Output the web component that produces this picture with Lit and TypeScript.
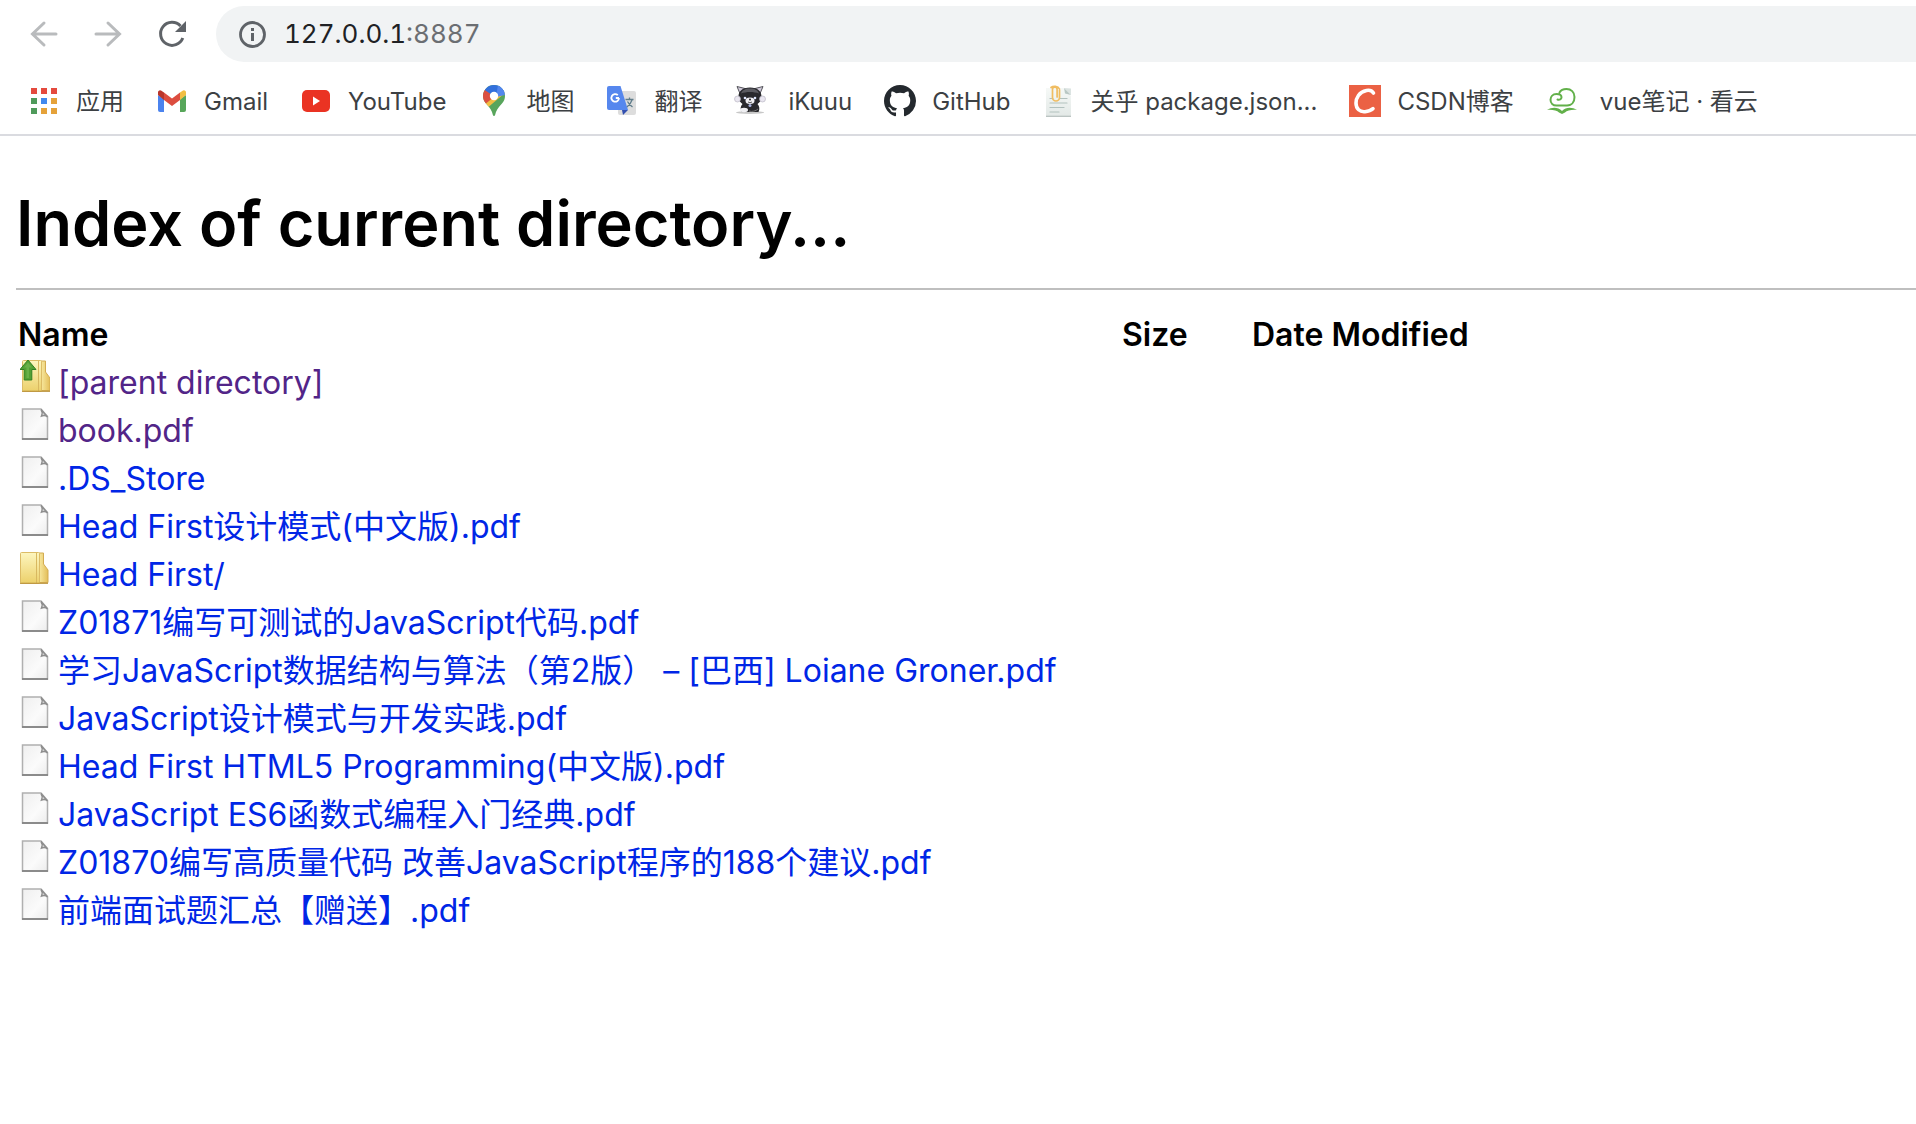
import { LitElement, html, svg, css } from "lit";
import { customElement } from "lit/decorators.js";
import { classMap } from "lit/directives/class-map.js";

type Kind = "parent" | "folder" | "file";

interface Entry {
  name: string;
  kind: Kind;
  visited?: boolean;
}

const entries: Entry[] = [
  { name: "[parent directory]", kind: "parent", visited: true },
  { name: "book.pdf", kind: "file", visited: true },
  { name: ".DS_Store", kind: "file" },
  { name: "Head First设计模式(中文版).pdf", kind: "file" },
  { name: "Head First/", kind: "folder" },
  { name: "Z01871编写可测试的JavaScript代码.pdf", kind: "file" },
  { name: "学习JavaScript数据结构与算法（第2版） – [巴西] Loiane Groner.pdf", kind: "file" },
  { name: "JavaScript设计模式与开发实践.pdf", kind: "file" },
  { name: "Head First HTML5 Programming(中文版).pdf", kind: "file" },
  { name: "JavaScript ES6函数式编程入门经典.pdf", kind: "file" },
  { name: "Z01870编写高质量代码 改善JavaScript程序的188个建议.pdf", kind: "file" },
  { name: "前端面试题汇总【赠送】.pdf", kind: "file" },
];

const appsIcon = svg`
  <g fill="#e44a3e"><rect x="3" y="3" width="6" height="6"/><rect x="13" y="3" width="6" height="6"/><rect x="23" y="3" width="6" height="6"/></g>
  <g fill="#4f9a5b"><rect x="3" y="13" width="6" height="6"/><rect x="3" y="23" width="6" height="6"/></g>
  <rect x="13" y="13" width="6" height="6" fill="#4189ee"/>
  <g fill="#e5a23a"><rect x="23" y="13" width="6" height="6"/><rect x="13" y="23" width="6" height="6"/><rect x="23" y="23" width="6" height="6"/></g>`;

const gmailIcon = svg`
  <path d="M2 10V25a2 2 0 0 0 2 2h4V14z" fill="#4b83ee"/>
  <path d="M30 10V25a2 2 0 0 1-2 2h-4V14z" fill="#57a65a"/>
  <path d="M24 7.500L27 5.600a2 2 0 0 1 3 2V10l-6 5z" fill="#f2be42"/>
  <path d="M8 7.500L16 13.500 24 7.500V15L16 21 8 15z" fill="#dc4d3f"/>
  <path d="M8 7.500L5 5.600a2 2 0 0 0-3 2V10l6 5z" fill="#b9352b"/>`;

const youtubeIcon = svg`
  <rect x="2" y="5" width="28" height="22" rx="5" fill="#ea3323"/>
  <path d="M13 11.500v9l7-4.500z" fill="#fff"/>`;

const mapsIcon = svg`
  <clipPath id="pin"><path d="M16 0a11 11 0 0 0-11 11c0 3 1 5 3 7.500 4 4.500 6 7 6.900 11.500.3 1.300 1.900 1.300 2.200 0C18 25.500 20 23 24 18.500c2-2.500 3-4.500 3-7.500A11 11 0 0 0 16 0z"/></clipPath>
  <g clip-path="url(#pin)">
    <rect width="32" height="32" fill="#58a55c"/>
    <path d="M0 26L20 4 27 8 8 24H0z" fill="#f1bd42"/>
    <path d="M0 15L7 4l9 8L6 20z" fill="#db4f42"/>
    <path d="M5 4L12 -3H30V7L23 7.500 16 11z" fill="#3270dc"/>
    <path d="M20 0h12v9L18 12z" fill="#5387ee"/>
  </g>
  <circle cx="16" cy="11" r="4.200" fill="#fff"/>`;

const translateIcon = svg`
  <rect x="12" y="6" width="18" height="24" rx="2" fill="#dddddd"/>
  <path d="M16 25h6l-5 5z" fill="#3350b0"/>
  <path d="M3 1H14.500L22 25H3a2 2 0 0 1-2-2V3a2 2 0 0 1 2-2z" fill="#5687ee"/>
  <path d="M13 13H9.800M13 13a3.800 3.800 0 1 1-1.200-2.900" fill="none" stroke="#fff" stroke-width="1.800"/>
  <path d="M19.500 14.500h8M23.500 12.500v2M26 15c-1 3-3 5.500-5 7M21.500 16.500c1 2 3 4 5 5.500" fill="none" stroke="#607d8b" stroke-width="1.300"/>`;

const catIcon = svg`
  <ellipse cx="16" cy="27.500" rx="14" ry="1.500" fill="#c8c8c8"/>
  <path d="M3 1.500L13 4 7 11zM29 1.500L19 4 25 11z" fill="#cfc9d8" stroke="#55555c" stroke-width="1"/>
  <path d="M16 2.500c8 0 11.500 4 11.500 9 0 4-2 6-4 7.500 2 2 2.500 5 1 8h-17c-1.500-3-1-6 1-8-2-1.500-4-3.500-4-7.500 0-5 3.500-9 11.500-9z" fill="#29292d"/>
  <path d="M16 3.500c5 0 8 2 9 5-5-2-13-2-18 0 1-3 4-5 9-5z" fill="#5b5b61"/>
  <circle cx="3.500" cy="14" r="3" fill="#e9e6f0" stroke="#b4b0be" stroke-width=".6"/>
  <circle cx="28.500" cy="14" r="3" fill="#e9e6f0" stroke="#b4b0be" stroke-width=".6"/>
  <ellipse cx="16" cy="15.800" rx="4.500" ry="3.200" fill="#f1f0f4"/>
  <circle cx="11" cy="13" r="1.300" fill="#dfe7ff"/><circle cx="21" cy="13" r="1.300" fill="#dfe7ff"/>
  <circle cx="16" cy="14.500" r="1" fill="#222"/>
  <path d="M14 17q2 1.500 4 0" stroke="#333" stroke-width=".8" fill="none"/>
  <circle cx="16" cy="20.500" r="1.500" fill="#aab3e0"/>
  <ellipse cx="10" cy="25" rx="4" ry="2.200" fill="#efeff2"/>
  <path d="M15 26c3 1 7 0 9-2" stroke="#777" stroke-width="1" fill="none"/>`;

const githubIcon = svg`
  <path transform="scale(2)" fill="#24292e" fill-rule="evenodd" d="M8 0C3.580 0 0 3.580 0 8c0 3.540 2.290 6.530 5.470 7.590.4.070.55-.17.55-.38 0-.19-.01-.82-.01-1.490-2.010.37-2.530-.49-2.690-.94-.09-.23-.48-.94-.82-1.130-.28-.15-.68-.52-.01-.53.63-.01 1.080.58 1.230.82.72 1.210 1.870.87 2.330.66.070-.52.28-.87.51-1.070-1.780-.2-3.640-.89-3.640-3.950 0-.87.31-1.590.82-2.150-.08-.2-.36-1.020.08-2.120 0 0 .67-.21 2.200.82.64-.18 1.320-.27 2-.27s1.360.09 2 .27c1.530-1.040 2.200-.82 2.200-.82.44 1.100.16 1.920.08 2.120.51.56.82 1.270.82 2.150 0 3.070-1.870 3.750-3.650 3.950.29.25.54.73.54 1.480 0 1.070-.01 1.930-.01 2.200 0 .21.15.46.55.38A8.010 8.010 0 0 0 16 8c0-4.420-3.580-8-8-8z"/>`;

const noteIcon = svg`
  <defs><linearGradient id="note" x1="0" y1="0" x2="0" y2="1"><stop offset="0" stop-color="#f6f9f7"/><stop offset="1" stop-color="#e3e9e7"/></linearGradient></defs>
  <path d="M4 3H22l7 8V31H4z" fill="url(#note)"/>
  <path d="M4 31.300H29" stroke="#b4bebc" stroke-width="1.200"/>
  <path d="M22 3l7 7V3.500z" fill="#dce4e2"/>
  <path d="M22 3l7 7-6-1.500z" fill="#b9c8c4"/>
  <path d="M8 13.500h3M18 13.500h7M8 18h17M8 22.500h14M8 27h9" stroke="#b2c1be" stroke-width="1.200" stroke-linecap="round"/>
  <path d="M17.500 5v7.500a3.500 3.500 0 0 1-7 0V4.500a2.300 2.300 0 0 1 4.600 0V12M9 2.500C11 .8 16 .5 17.500 4" fill="none" stroke="#f0bd62" stroke-width="1.700" stroke-linecap="round"/>`;

const csdnIcon = svg`
  <rect width="32" height="32" fill="#eb6144"/>
  <path d="M24.500 8C23 5.800 20 5 17.500 5.500 10 7 7 13 7 18c0 6 4 9.200 9 8.700 3-.3 6-1.200 8-3" fill="none" stroke="#fff" stroke-width="3.600" stroke-linecap="round"/>`;

const cloudIcon = svg`
  <path d="M11.500 14.500c2 .8 4-.3 4-2.200 0-2.200-2.500-3.300-5-3.300-4 0-6 3-6 5.800 0 3.400 2.500 5.700 6 5.700H21c5 0 7.500-4 7.500-8.500 0-5-3.500-8-8-8-3.500 0-6 1.500-7 3.500" fill="none" stroke="#62b04a" stroke-width="2" stroke-linecap="round"/>
  <path d="M1 25c5-3 11-3 15 1 4-4 10-4 15-1-5-.5-10 .5-12 2.500l-3 1.500-3-1.500C11 25.500 6 24.500 1 25z" fill="#62b04a"/>`;

const bookmarks = [
  { label: "应用", icon: appsIcon },
  { label: "Gmail", icon: gmailIcon },
  { label: "YouTube", icon: youtubeIcon },
  { label: "地图", icon: mapsIcon },
  { label: "翻译", icon: translateIcon },
  { label: "iKuuu", icon: catIcon, wide: true },
  { label: "GitHub", icon: githubIcon },
  { label: "关乎 package.json...", icon: noteIcon },
  { label: "CSDN博客", icon: csdnIcon },
  { label: "vue笔记 · 看云", icon: cloudIcon, wide: true },
];

@customElement("browser-toolbar")
class BrowserToolbar extends LitElement {
  static styles = css`
    :host { display: block; border-bottom: 2px solid #dadbe0; background: #fff; }
    .nav { display: flex; align-items: center; height: 68px; padding-left: 28px; gap: 32px; }
    .tool { display: flex; width: 32px; height: 32px; padding: 0; border: 0; background: none; }
    .address {
      display: flex; flex: 1; align-items: center; gap: 16px; height: 56px; margin-left: -4px;
      padding-left: 20px; border-radius: 28px 0 0 28px; background: #f1f3f4;
    }
    .icon { display: block; flex: none; width: 32px; height: 32px; }
    .url { font-size: 26px; line-height: 40px; font-variant-numeric: tabular-nums; color: #202124; }
    .port { color: #6b6e72; }
    .marks { display: flex; align-items: center; gap: 32px; height: 66px; padding: 0 28px; }
    .mark {
      display: flex; align-items: center; gap: 16px; color: #3c4043; text-decoration: none;
      font-size: 24px; line-height: 32px; white-space: nowrap;
    }
    .label { padding-top: 2px; }
    .wide { gap: 22px; }
  `;

  render() {
    return html`
      <nav class="nav" aria-label="Navigation">
        <button class="tool" aria-label="Back">
          <svg class="icon" viewBox="0 0 32 32" fill="none" stroke="#b9bbbd" stroke-width="3" stroke-linecap="round"><path d="M28 16H5M16 5L4.500 16 16 27"/></svg>
        </button>
        <button class="tool" aria-label="Forward">
          <svg class="icon" viewBox="0 0 32 32" fill="none" stroke="#b9bbbd" stroke-width="3" stroke-linecap="round"><path d="M4 16H27M16 5L27.500 16 16 27"/></svg>
        </button>
        <button class="tool" aria-label="Reload">
          <svg class="icon" viewBox="0 0 32 32"><path d="M26.800 20A11.500 11.500 0 1 1 24.500 8" fill="none" stroke="#5f6368" stroke-width="3"/><path d="M30 3V14H19z" fill="#5f6368"/></svg>
        </button>
        <div class="address">
          <svg class="icon" viewBox="0 0 32 32"><circle cx="16.500" cy="16.500" r="12" fill="none" stroke="#5f6368" stroke-width="2.800"/><path d="M15 15h3v8h-3zM15 10h3v3h-3z" fill="#5f6368"/></svg>
          <span class="url">127.0.0.1<span class="port">:8887</span></span>
        </div>
      </nav>
      <nav class="marks" aria-label="Bookmarks">
        ${bookmarks.map(
          (b) => html`<a class=${classMap({ mark: true, wide: !!b.wide })} href="#">
            <svg class="icon" viewBox="0 0 32 32" aria-hidden="true">${b.icon}</svg><span class="label">${b.label}</span>
          </a>`
        )}
      </nav>
    `;
  }
}

const folderBody = svg`
  <defs>
    <linearGradient id="gold" x1="0" y1="0" x2="0" y2="1"><stop offset="0" stop-color="#fdf6bf"/><stop offset="1" stop-color="#ecd06a"/></linearGradient>
    <linearGradient id="side" x1="0" y1="0" x2="1" y2="0"><stop offset="0" stop-color="#f8e9a0"/><stop offset="1" stop-color="#e3be59"/></linearGradient>
  </defs>
  <path d="M19 1h4.500v11l4.500 6v12.500H19z" fill="url(#side)" stroke="#d3ac52" stroke-width="1"/>
  <rect x="0.500" y="0.500" width="19" height="31" rx="1" fill="url(#gold)" stroke="#dcbc66" stroke-width="1"/>
  <path d="M16.500 1v30" stroke="#d8b860" stroke-width="1"/>
  <path d="M0 31.300h28" stroke="#bd9640" stroke-width="1.200"/>`;

const fileIcons = {
  folder: folderBody,
  parent: svg`
    <g transform="translate(2 0)">${folderBody}</g>
    <path d="M8 0l8 9.500h-4.200V20H4.200V9.500H0z" fill="#53a034" stroke="#338023" stroke-width="1"/>
    <path d="M8 2.500l4 5H9V18H6.500V7.500H4z" fill="#68b048"/>`,
  file: svg`
    <defs><linearGradient id="sheet" x1="0" y1="0" x2="1" y2="1"><stop offset="0" stop-color="#efefef"/><stop offset=".6" stop-color="#fbfbfb"/><stop offset="1" stop-color="#ececec"/></linearGradient></defs>
    <path d="M2.500 1H21l6.500 7.500V31h-25z" fill="url(#sheet)" stroke="#b0b0b0" stroke-width="1.500"/>
    <path d="M2 31h26" stroke="#858585" stroke-width="1.800"/>
    <path d="M21 1.500c1.500 2 1.500 4 .5 6.500 2.500-1 4.500-.5 6 1z" fill="#dcdcdc" stroke="#8e8e8e" stroke-width="1.400"/>`,
};

@customElement("directory-listing")
class DirectoryListing extends LitElement {
  static styles = css`
    :host { display: block; padding-left: 16px; color: #000; font-size: 32px; line-height: 48px; }
    .title { margin: 0; padding: 47px 0 25px; font-size: 63px; line-height: 80px; font-weight: 600; }
    .rule { margin: 0; border: 0; border-top: 2px solid #bfbfbf; }
    .listing { margin-top: 21px; border-collapse: collapse; white-space: nowrap; }
    .head, .cell { height: 48px; padding: 0; text-align: left; font-weight: 600; }
    .cell { font-weight: 400; }
    .name { width: 1102px; }
    .size { width: 128px; }
    .head { padding-left: 2px; }
    .link { display: flex; gap: 8px; padding-left: 4px; color: #0026e6; text-decoration: none; }
    .visited { color: #522588; }
    .icon { display: block; flex: none; width: 30px; height: 32px; margin-top: 1px; }
  `;

  render() {
    return html`
      <h1 class="title">Index of current directory...</h1>
      <hr class="rule" />
      <table class="listing">
        <thead>
          <tr>
            <th class="head name" scope="col">Name</th>
            <th class="head size" scope="col">Size</th>
            <th class="head" scope="col">Date Modified</th>
          </tr>
        </thead>
        <tbody>
          ${entries.map(
            (e) => html`<tr>
              <td class="cell"><a class=${classMap({ link: true, visited: !!e.visited })} href="#">
                <svg class="icon" viewBox="0 0 30 32" aria-hidden="true">${fileIcons[e.kind]}</svg><span>${e.name}</span></a></td>
              <td class="cell"></td>
              <td class="cell"></td>
            </tr>`
          )}
        </tbody>
      </table>
    `;
  }
}

@customElement("app-root")
class AppRoot extends LitElement {
  static styles = css`
    :host {
      display: block; min-height: 100vh; background: #fff;
      font-family: Inter, "Noto Sans CJK SC", sans-serif;
    }
  `;

  render() {
    return html`<browser-toolbar></browser-toolbar><main><directory-listing></directory-listing></main>`;
  }
}
